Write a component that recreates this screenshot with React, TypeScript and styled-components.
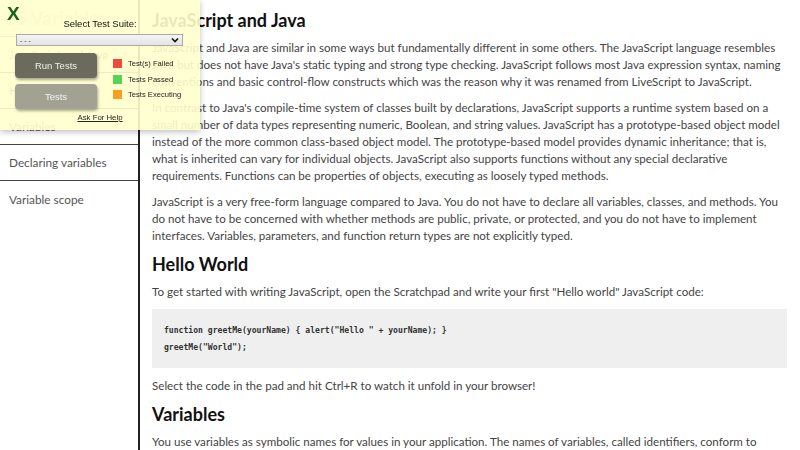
import React from "react";
import styled, { createGlobalStyle } from "styled-components";

const Global = createGlobalStyle`
  html, body { margin: 0; padding: 0; background: #fff; }
  body { font-family: Lato, "Open Sans", sans-serif; overflow: hidden; }
  * { box-sizing: border-box; }
`;

const Page = styled.div`
  display: flex;
  width: 800px;
  height: 450px;
  overflow: hidden;
`;

const Sidebar = styled.nav`
  width: 140px;
  flex: none;
  border-right: 2px solid #222;
  display: flex;
  flex-direction: column;
`;

const SideTitle = styled.div`
  height: 37px;
  padding: 6px 0 0 8px;
  font-size: 19px;
  font-weight: 700;
  color: #c9c9b8;
  border-bottom: 1px solid #888;
  white-space: nowrap;
`;

const NavItem = styled.div<{ $last?: boolean }>`
  height: 36px;
  display: flex;
  align-items: center;
  padding-left: 9px;
  font-size: 11.8px;
  color: #555;
  border-bottom: ${(p) => (p.$last ? "none" : "1px solid #444")};
`;

const Main = styled.main`
  flex: 1;
  padding: 0 13px 0 12px;
  color: #444;
  overflow: hidden;
`;

const H2 = styled.h2<{ $top?: number }>`
  margin: ${(p) => p.$top ?? 10}px 0 9px;
  font-size: 18px;
  font-weight: 700;
  color: #111;
  line-height: 20px;
`;

const P = styled.p`
  margin: 0 0 9px;
  font-size: 11.6px;
  line-height: 17px;
  color: #444;
`;

const Code = styled.pre`
  margin: 8px 0 9px;
  background: #efefef;
  padding: 13px 12px 12px;
  font-family: "DejaVu Sans Mono", monospace;
  font-size: 8.1px;
  font-weight: 700;
  line-height: 17px;
  color: #333;
`;

const Overlay = styled.div`
  position: fixed;
  top: 0;
  left: 0;
  width: 200px;
  height: 130px;
  background: rgba(255, 255, 205, 0.9);
  box-shadow: 0 2px 6px rgba(0, 0, 0, 0.25);
  font-family: "Liberation Sans", Arial, sans-serif;
  display: flex;
  flex-direction: column;
`;

const Close = styled.div`
  position: absolute;
  left: 7px;
  top: 4px;
  font-size: 19px;
  font-weight: 900;
  color: #15631a;
  font-family: "Liberation Sans", Arial, sans-serif;
  line-height: 20px;
`;

const SuiteLabel = styled.div`
  margin-top: 18px;
  text-align: center;
  font-size: 9.5px;
  line-height: 12px;
  color: #111;
`;

const Select = styled.div`
  margin: 4px 17px 0 16px;
  height: 12px;
  border: 1px solid #aaa;
  background: linear-gradient(#f4f4f4, #e4e4e4);
  display: flex;
  align-items: center;
  justify-content: space-between;
  padding: 0 3px;
  font-size: 7px;
  color: #333;
`;

const Body = styled.div`
  display: flex;
  gap: 16px;
  margin-top: 7px;
  padding-left: 15px;
`;

const BtnCol = styled.div`
  width: 82px;
  display: flex;
  flex-direction: column;
  gap: 6px;
`;

const Btn = styled.div<{ $dark?: boolean }>`
  height: 25px;
  border-radius: 4px;
  background: ${(p) => (p.$dark ? "#6b6a5c" : "#a3a292")};
  color: ${(p) => (p.$dark ? "#eee" : "#f2f2f2")};
  box-shadow: 1px 2px 3px rgba(0, 0, 0, 0.35);
  display: flex;
  align-items: center;
  justify-content: center;
  font-size: 9.5px;
`;

const Legend = styled.div`
  margin-top: 6px;
  display: flex;
  flex-direction: column;
  gap: 6.5px;
`;

const LegendRow = styled.div`
  display: flex;
  align-items: center;
  gap: 6px;
  font-size: 7.6px;
  color: #222;
  height: 9px;
  white-space: nowrap;
`;

const Swatch = styled.span<{ $c: string }>`
  width: 9px;
  height: 9px;
  background: ${(p) => p.$c};
  flex: none;
`;

const Help = styled.a`
  align-self: center;
  font-size: 7.8px;
  line-height: 10px;
  color: #222;
  text-decoration: underline;
  margin-top: 4px;
`;

export default function App() {
  return (
    <>
      <Global />
      <Page>
        <Sidebar>
          <SideTitle>JS Variables</SideTitle>
          <NavItem>JavaScript and Java</NavItem>
          <NavItem>Hello World</NavItem>
          <NavItem>Variables</NavItem>
          <NavItem>Declaring variables</NavItem>
          <NavItem $last>Variable scope</NavItem>
        </Sidebar>
        <Main>
          <H2 $top={10}>JavaScript and Java</H2>
          <P>
            JavaScript and Java are similar in some ways but fundamentally different in some others. The JavaScript language resembles Java but does not have Java's static typing and strong type checking. JavaScript follows most Java expression syntax, naming conventions and basic control-flow constructs which was the reason why it was renamed from LiveScript to JavaScript.
          </P>
          <P>
            In contrast to Java's compile-time system of classes built by declarations, JavaScript supports a runtime system based on a small number of data types representing numeric, Boolean, and string values. JavaScript has a prototype-based object model instead of the more common class-based object model. The prototype-based model provides dynamic inheritance; that is, what is inherited can vary for individual objects. JavaScript also supports functions without any special declarative requirements. Functions can be properties of objects, executing as loosely typed methods.
          </P>
          <P>
            JavaScript is a very free-form language compared to Java. You do not have to declare all variables, classes, and methods. You do not have to be concerned with whether methods are public, private, or protected, and you do not have to implement interfaces. Variables, parameters, and function return types are not explicitly typed.
          </P>
          <H2>Hello World</H2>
          <P>To get started with writing JavaScript, open the Scratchpad and write your first "Hello world" JavaScript code:</P>
          <Code>{`function greetMe(yourName) { alert("Hello " + yourName); }
greetMe("World");`}</Code>
          <P>Select the code in the pad and hit Ctrl+R to watch it unfold in your browser!</P>
          <H2>Variables</H2>
          <P>
            You use variables as symbolic names for values in your application. The names of variables, called identifiers, conform to certain rules.
          </P>
        </Main>
      </Page>
      <Overlay>
        <Close>X</Close>
        <SuiteLabel>Select Test Suite:</SuiteLabel>
        <Select>
          <span>- - -</span>
          <svg width="8" height="6" viewBox="0 0 8 6">
            <path d="M1 1.5 L4 4.5 L7 1.5" stroke="#111" strokeWidth="1.6" fill="none" />
          </svg>
        </Select>
        <Body>
          <BtnCol>
            <Btn $dark>Run Tests</Btn>
            <Btn>Tests</Btn>
          </BtnCol>
          <Legend>
            <LegendRow><Swatch $c="#f04a3f" />Test(s) Failed</LegendRow>
            <LegendRow><Swatch $c="#55d45a" />Tests Passed</LegendRow>
            <LegendRow><Swatch $c="#f7a020" />Tests Executing</LegendRow>
          </Legend>
        </Body>
        <Help>Ask For Help</Help>
      </Overlay>
    </>
  );
}
